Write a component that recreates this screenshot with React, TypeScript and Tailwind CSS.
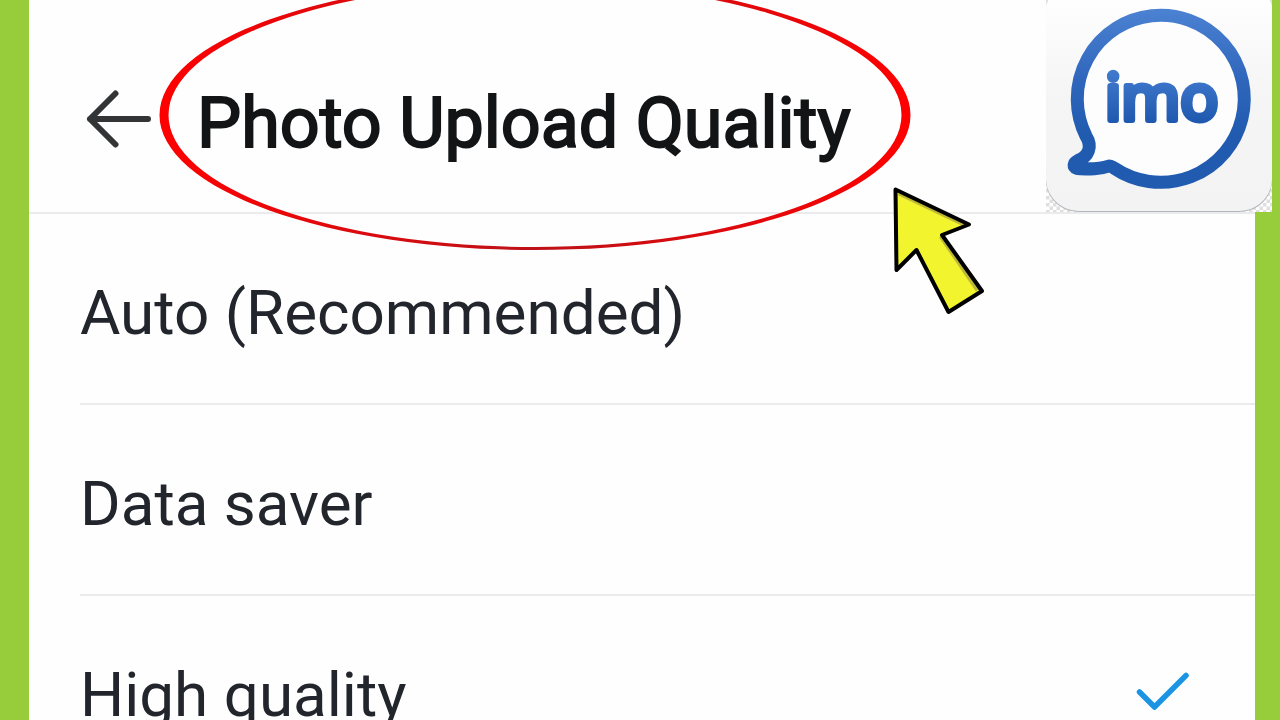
import { useState } from "react";

const options = ["Auto (Recommended)", "Data saver", "High quality"];

function BackArrow() {
  return (
    <svg viewBox="0 0 66 60" className="h-[60px] w-[66px]" fill="none" stroke="#333435" strokeWidth="6" strokeLinecap="round" strokeLinejoin="round" aria-hidden="true">
      <path d="M29.500 4.500 4 30l25.500 25.500M4 30h58" />
    </svg>
  );
}

function Check() {
  return (
    <svg viewBox="0 0 54 40" className="mb-2 hidden h-10 w-[54px] peer-checked:block" fill="none" stroke="#1b95e3" strokeWidth="5.500" strokeLinecap="round" strokeLinejoin="round" aria-hidden="true">
      <path d="m3.500 21 15 15L50 4.500" />
    </svg>
  );
}

function Ring() {
  return (
    <svg viewBox="0 0 752 272" className="pointer-events-none absolute -top-[21px] left-[130px] h-[272px] w-[752px]" aria-hidden="true">
      <defs>
        <linearGradient id="ring" x1="0" x2="1" y1="0" y2="0">
          <stop offset="0" stopColor="#ff0000" />
          <stop offset="0.12" stopColor="#ee0507" />
          <stop offset="0.5" stopColor="#bd1218" />
          <stop offset="0.88" stopColor="#ee0507" />
          <stop offset="1" stopColor="#ff0000" />
        </linearGradient>
      </defs>
      <path
        fill="url(#ring)"
        fillRule="evenodd"
        d="M.5 136a375.500 135 0 1 0 751 0a375.500 135 0 1 0-751 0ZM9.500 136a366.500 132 0 1 0 733 0a366.500 132 0 1 0-733 0Z"
      />
    </svg>
  );
}

function Pointer() {
  return (
    <svg viewBox="0 0 96 132" className="pointer-events-none absolute left-[861px] top-[184px] h-[132px] w-24" aria-hidden="true">
      <path d="M6 5.500 79 40.500 52.500 51 92 107 58.500 128 26.500 66 7 86Z" fill="#f2f52e" />
      <path d="M9 9 74 40M51 52 88 106" fill="none" stroke="#bdb83a" strokeWidth="5" />
      <path d="M5.500 5.500 79 40.500 52 51 92 107 58.500 128 26.500 66 6.500 86Z" fill="none" stroke="#000" strokeWidth="4" strokeLinejoin="round" />
    </svg>
  );
}

function ImoLogo() {
  return (
    <svg viewBox="0 0 226 212" className="absolute -right-[17px] top-0 h-[212px] w-[226px]" role="img" aria-label="imo">
      <defs>
        <pattern id="checker" width="7" height="7" patternUnits="userSpaceOnUse">
          <path d="M0 0h7v7H0z" fill="#fff" />
          <path d="M0 0h3.500v3.500H0zM3.500 3.500h3.500v3.500H3.500z" fill="#dfdfdf" />
        </pattern>
        <linearGradient id="tile" x1="0" x2="0" y1="0" y2="1">
          <stop offset="0" stopColor="#fefefe" />
          <stop offset="0.45" stopColor="#f5f5f6" />
          <stop offset="1" stopColor="#f3f3f4" />
        </linearGradient>
        <linearGradient id="blue" gradientUnits="userSpaceOnUse" x1="0" x2="0" y1="8" y2="188">
          <stop offset="0" stopColor="#4c82d2" />
          <stop offset="0.4" stopColor="#2f66bc" />
          <stop offset="0.7" stopColor="#205bb0" />
          <stop offset="1" stopColor="#205bb0" />
        </linearGradient>
        <linearGradient id="word" gradientUnits="userSpaceOnUse" x1="0" x2="0" y1="70" y2="124">
          <stop offset="0" stopColor="#427bce" />
          <stop offset="1" stopColor="#1e58ae" />
        </linearGradient>
      </defs>
      <path d="M0 0h226v212H0z" fill="url(#checker)" />
      <path d="M2 0h222L226 6v174c0 18-14 32-34 32H34C14 212 0 198 0 180V6Z" fill="#b2b7bd" />
      <path d="M2 0h222L226 6v172c0 18-14 33-34 33H34C14 211 0 196 0 178V6Z" fill="url(#tile)" />
      <path
        d="M40 136A83.500 83.500 0 1 1 68 168C66 167 65 166 63 166C52 170 42 169 31 168.500C27 167 27 163 32 160.500C42 157 47 147 40 136Z"
        fill="#fdfdfe"
        stroke="url(#blue)"
        strokeWidth="13"
        strokeLinejoin="round"
      />
      <text x="59" y="120" fontSize="63" fill="url(#word)" stroke="url(#word)" strokeWidth="6" strokeLinejoin="round" className="font-['Noto_Sans',sans-serif]">
        imo
      </text>
    </svg>
  );
}

export default function App() {
  const [selected, setSelected] = useState("High quality");

  return (
    <div className="h-screen overflow-hidden bg-[#97cc3a] pl-[29px] pr-[25px] font-['Roboto',sans-serif]">
      <main className="relative min-h-full bg-[#fefefe]">
        <header className="flex h-[214px] items-center border-b-2 border-[#ebebeb] pl-[57px] pt-[34px]">
          <button type="button" aria-label="Back" className="mb-2 mr-[45px] shrink-0">
            <BackArrow />
          </button>
          <h1 className="whitespace-nowrap text-[70px] font-normal leading-[80px] text-[#121415] [-webkit-text-stroke:2px_#121415]">Photo Upload Quality</h1>
        </header>
        <form className="pl-[51px]">
          {options.map((name) => (
            <label key={name} className="flex h-[191px] items-center justify-between border-b-2 border-[#ebebeb] pr-[65px] pt-2">
              <span className="whitespace-nowrap text-[62px] leading-[72px] text-[#22262c]">{name}</span>
              <input
                type="radio"
                name="quality"
                value={name}
                checked={selected === name}
                onChange={() => setSelected(name)}
                className="peer sr-only"
              />
              <Check />
            </label>
          ))}
        </form>
        <Ring />
        <Pointer />
        <ImoLogo />
      </main>
    </div>
  );
}
